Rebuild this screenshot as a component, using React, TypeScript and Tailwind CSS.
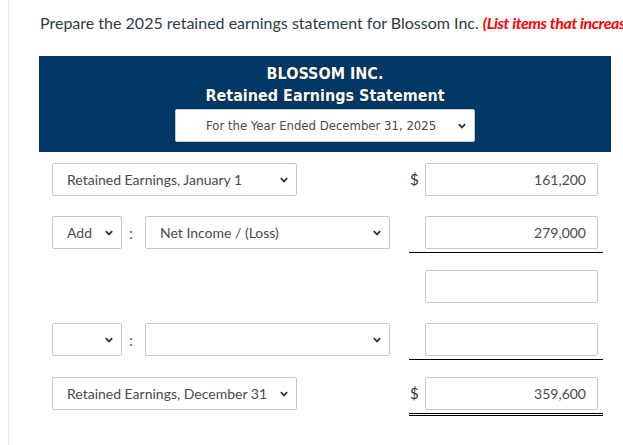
import React from "react";

function Chevron() {
  return (
    <svg width="8" height="6" viewBox="0 0 8 6" className="shrink-0">
      <path d="M0.8 1.2 L4 4.4 L7.2 1.2" fill="none" stroke="#333" strokeWidth="1.8" />
    </svg>
  );
}

function Select({ label, w, header }: { label?: string; w: string; header?: boolean }) {
  return (
    <div
      className={`${w} h-[33px] flex items-center justify-between bg-white border border-[#c8c8c8] rounded-[2px] pr-[8px] text-[#4a4a4a] ${
        header
          ? "pl-[30px] font-['DejaVu_Sans_Condensed','DejaVu_Sans',sans-serif] text-[13px]"
          : "pl-[14px] text-[14px]"
      }`}
    >
      <span className="whitespace-nowrap">{label}</span>
      <Chevron />
    </div>
  );
}

function Amount({ value, dollar, line }: { value?: string; dollar?: boolean; line?: "single" | "double" }) {
  const lineCls =
    line === "single"
      ? "border-b border-black pb-[3px]"
      : line === "double"
      ? "border-b-[3px] border-double border-black pb-[3px]"
      : "";
  return (
    <div className={`w-[194px] flex items-center pr-[5px] ${lineCls}`}>
      <span className="w-[16px] pl-[1px] text-[15px] text-[#333]">{dollar ? "$" : ""}</span>
      <div className="w-[173px] h-[33px] border border-[#c8c8c8] rounded-[2px] flex items-center justify-end pr-[11px] text-[14px] text-[#4a4a4a]">
        {value}
      </div>
    </div>
  );
}

function Colon() {
  return <span className="w-[23px] pl-[7px] text-[16px] text-[#666] leading-none">:</span>;
}

export default function App() {
  return (
    <div className="w-[623px] h-[445px] overflow-hidden bg-white flex font-['Lato','Noto_Sans',sans-serif]">
      <div className="w-[8px] shrink-0" />
      <div className="flex-1 border-l border-[#e4e4e4] pl-[30px] min-w-0">
        <p className="mt-[11px] text-[16px] leading-[24px] text-[#2d3b45] whitespace-nowrap pl-[1px]">
          Prepare the 2025 retained earnings statement for Blossom Inc.{" "}
          <span className="text-[#ff0000] italic font-bold tracking-[-0.4px]">
            (List items that increase retained earnings first.)
          </span>
        </p>

        <div className="mt-[21px] w-[572px] h-[96px] bg-[#003764] flex flex-col items-center pt-[7px] font-['DejaVu_Sans_Condensed','DejaVu_Sans',sans-serif] text-white font-bold">
          <div className="text-[16px] leading-[22px] [text-shadow:0_0_1px_#000]">BLOSSOM INC.</div>
          <div className="text-[16px] leading-[22px] [text-shadow:0_0_1px_#000]">Retained Earnings Statement</div>
          <div className="mt-[2px] font-normal">
            <Select w="w-[300px]" label="For the Year Ended December 31, 2025" header />
          </div>
        </div>

        <div className="ml-[13px] flex flex-col">
          {/* row 1 */}
          <div className="mt-[11px] flex items-start">
            <div className="w-[357px]">
              <Select w="w-[245px]" label="Retained Earnings, January 1" />
            </div>
            <Amount dollar value="161,200" />
          </div>

          {/* row 2 */}
          <div className="mt-[20px] flex items-start">
            <div className="w-[357px] flex items-center">
              <Select w="w-[70px]" label="Add" />
              <Colon />
              <Select w="w-[245px]" label="Net Income / (Loss)" />
            </div>
            <Amount value="279,000" line="single" />
          </div>

          {/* row 3 */}
          <div className="mt-[17px] flex items-start">
            <div className="w-[357px]" />
            <Amount />
          </div>

          {/* row 4 */}
          <div className="mt-[20px] flex items-start">
            <div className="w-[357px] flex items-center">
              <Select w="w-[70px]" />
              <Colon />
              <Select w="w-[245px]" />
            </div>
            <Amount line="single" />
          </div>

          {/* row 5 */}
          <div className="mt-[17px] flex items-start">
            <div className="w-[357px]">
              <Select w="w-[245px]" label="Retained Earnings, December 31" />
            </div>
            <Amount dollar value="359,600" line="double" />
          </div>
        </div>
      </div>
    </div>
  );
}
